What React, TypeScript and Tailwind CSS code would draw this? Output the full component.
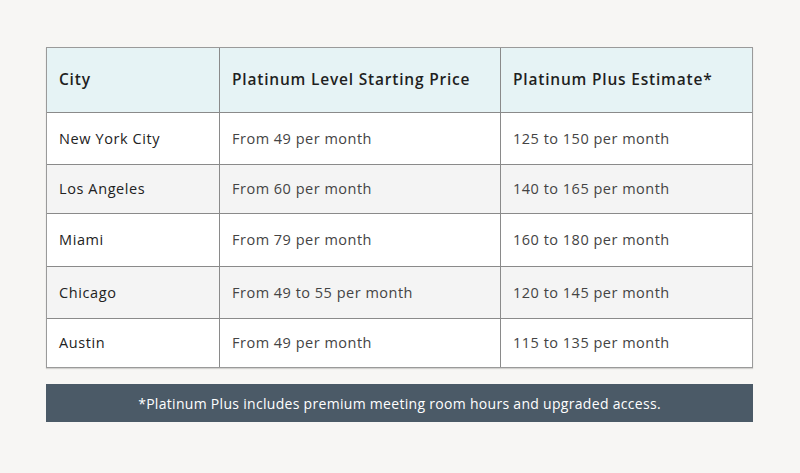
const rows = [
  { city: "New York City", start: "From 49 per month", plus: "125 to 150 per month", h: "h-[52px]", bg: "bg-white" },
  { city: "Los Angeles", start: "From 60 per month", plus: "140 to 165 per month", h: "h-[49px]", bg: "bg-[#f4f4f4]" },
  { city: "Miami", start: "From 79 per month", plus: "160 to 180 per month", h: "h-[53px]", bg: "bg-white" },
  { city: "Chicago", start: "From 49 to 55 per month", plus: "120 to 145 per month", h: "h-[52px]", bg: "bg-[#f4f4f4]" },
  { city: "Austin", start: "From 49 per month", plus: "115 to 135 per month", h: "h-[48px]", bg: "bg-white" },
];

const App = () => {
  return (
    <div className="min-h-screen w-[800px] h-[473px] bg-[#f7f6f4] pt-[47px] pl-[46px] font-['Open_Sans',sans-serif]">
      <div className="w-[707px] border border-[#9a9a9a] shadow-[0_1px_1px_rgba(0,0,0,0.15)]">
        {/* header */}
        <div className="flex h-[65px] bg-[#e6f3f5] border-b border-[#8a8a8a] text-[15.5px] tracking-[0.8px] font-semibold text-[#1f1f1f]">
          <div className="w-[173px] flex items-center px-[12px] border-r border-[#8a8a8a]">City</div>
          <div className="w-[281px] flex items-center px-[12px] border-r border-[#8a8a8a]">Platinum Level Starting Price</div>
          <div className="flex-1 flex items-center px-[12px]">Platinum Plus Estimate*</div>
        </div>
        {rows.map((r, i) => (
          <div
            key={r.city}
            className={`flex ${r.h} ${r.bg} text-[14.5px] ${i < rows.length - 1 ? "border-b border-[#8a8a8a]" : ""}`}
          >
            <div className="w-[173px] flex items-center px-[12px] border-r border-[#8a8a8a] font-medium tracking-[0.6px] text-[#222]">
              {r.city}
            </div>
            <div className="w-[281px] flex items-center px-[12px] border-r border-[#8a8a8a] tracking-[0.5px] text-[#444]">
              {r.start}
            </div>
            <div className="flex-1 flex items-center px-[12px] tracking-[0.5px] text-[#444]">{r.plus}</div>
          </div>
        ))}
      </div>
      <div className="mt-[16px] w-[707px] h-[38px] bg-[#4b5a67] flex items-center justify-center text-white text-[14px] tracking-[0.3px]">
        *Platinum Plus includes premium meeting room hours and upgraded access.
      </div>
    </div>
  );
};

export default App;
